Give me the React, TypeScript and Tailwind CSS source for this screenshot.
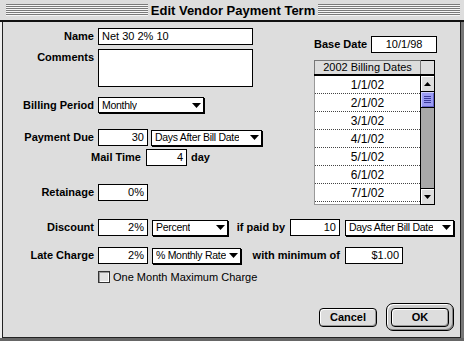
import React from "react";

function Field({ cls, children, align = "end" }: { cls: string; children?: React.ReactNode; align?: "start" | "end" | "center" }) {
  const a = align === "end" ? "justify-end" : align === "center" ? "justify-center" : "justify-start";
  return (
    <div className={`h-[17px] bg-white border border-black flex items-center px-[3px] whitespace-nowrap ${a} ${cls}`}>
      {children}
    </div>
  );
}

function Arrow() {
  return (
    <svg width="9" height="5" viewBox="0 0 9 5" className="shrink-0 ml-[2px]">
      <polygon points="0,0 9,0 4.5,5" fill="#000" />
    </svg>
  );
}

function Popup({ cls, children }: { cls: string; children: React.ReactNode }) {
  return (
    <div className={`h-[16px] bg-white border border-black shadow-[1px_1px_0_#000] flex items-center justify-between pl-[3px] pr-[2px] whitespace-nowrap ${cls}`}>
      <span className="text-[10.5px] tracking-[-0.3px] overflow-hidden">{children}</span>
      <Arrow />
    </div>
  );
}

function Label({ cls, children }: { cls: string; children: React.ReactNode }) {
  return <span className={`font-bold text-right whitespace-nowrap shrink-0 ${cls}`}>{children}</span>;
}

function Stripes() {
  return (
    <div className="flex-1 h-[12px] bg-[repeating-linear-gradient(to_bottom,#7a7a7a_0px,#7a7a7a_1px,#f6f6f6_1px,#f6f6f6_2px)]" />
  );
}

function Table() {
  const rows = ["1/1/02", "2/1/02", "3/1/02", "4/1/02", "5/1/02", "6/1/02", "7/1/02"];
  return (
    <div className="w-[121px] h-[145px] flex flex-col">
      <div className="flex h-[14px]">
        <div className="w-[107px] border-t border-l border-r border-[#777] bg-[#dddddd] flex items-center justify-center whitespace-nowrap">
          2002 Billing Dates
        </div>
        <div className="flex-1 border-t border-r border-black bg-[#dddddd]" />
      </div>
      <div className="h-[2px] bg-black" />
      <div className="flex-1 flex min-h-0">
        <div className="w-[106px] bg-white border-l border-b border-[#999] overflow-hidden flex flex-col">
          {rows.map((r) => (
            <div key={r} className="h-[18px] shrink-0 border-b border-dotted border-[#444] flex items-center justify-center text-[12px]">
              {r}
            </div>
          ))}
        </div>
        <div className="w-[15px] flex flex-col border-l border-r border-b border-black bg-[#a8a8a8]">
          <div className="h-[16px] bg-[#dddddd] border-b border-black flex items-center justify-center shadow-[inset_1px_1px_0_#fff]">
            <svg width="7" height="4" viewBox="0 0 7 4">
              <polygon points="3.5,0 7,4 0,4" fill="#000" />
            </svg>
          </div>
          <div className="h-[16px] bg-[#9c9cf4] border-b border-black flex flex-col items-center justify-center gap-[1px] shadow-[inset_1px_1px_0_#ccccff,inset_-1px_-1px_0_#6666cc]">
            <div className="w-[7px] h-[1px] bg-[#3a3a9a]" />
            <div className="w-[7px] h-[1px] bg-[#3a3a9a]" />
            <div className="w-[7px] h-[1px] bg-[#3a3a9a]" />
            <div className="w-[7px] h-[1px] bg-[#3a3a9a]" />
          </div>
          <div className="flex-1" />
          <div className="h-[16px] bg-[#dddddd] border-t border-black flex items-center justify-center shadow-[inset_1px_1px_0_#fff]">
            <svg width="7" height="4" viewBox="0 0 7 4">
              <polygon points="0,0 7,0 3.5,4" fill="#000" />
            </svg>
          </div>
        </div>
      </div>
    </div>
  );
}

export default function App() {
  return (
    <div className="w-[464px] h-[341px] flex flex-col overflow-hidden bg-[#dddddd] text-black font-['Liberation_Sans',Arial,sans-serif] text-[11px] leading-none">
      {/* Title bar */}
      <div className="h-[20px] flex items-center bg-[#dddddd] shrink-0">
        <div className="w-[6px]" />
        <Stripes />
        <div className="px-[3px] text-[13px] font-bold whitespace-nowrap">Edit Vendor Payment Term</div>
        <Stripes />
        <div className="w-[4px]" />
      </div>
      <div className="h-[2px] bg-[#111] shrink-0" />

      <div className="flex-1 flex min-h-0">
        <div className="w-[2px] bg-[#eeeeee]" />
        <div className="flex-1 flex flex-col border-l border-r border-b border-[#222] min-w-0">
          {/* Top section */}
          <div className="flex">
            <div className="w-[311px] flex flex-col">
              <div className="mt-[6px] h-[17px] flex items-center">
                <Label cls="w-[91px]">Name</Label>
                <Field cls="ml-[4px] w-[155px]" align="start">Net 30 2% 10</Field>
              </div>
              <div className="mt-[4px] h-[38px] flex items-start">
                <Label cls="w-[91px] pt-[3px]">Comments</Label>
                <div className="ml-[4px] w-[155px] h-[38px] bg-white border border-black" />
              </div>
              <div className="mt-[10px] h-[16px] flex items-center">
                <Label cls="w-[91px]">Billing Period</Label>
                <Popup cls="ml-[4px] w-[106px]">Monthly</Popup>
              </div>
              <div className="mt-[16px] h-[17px] flex items-center">
                <Label cls="w-[91px]">Payment Due</Label>
                <Field cls="ml-[4px] w-[50px]">30</Field>
                <Popup cls="ml-[3px] w-[111px]">Days After Bill Date</Popup>
              </div>
              <div className="mt-[3px] h-[17px] flex items-center">
                <Label cls="w-[138px]">Mail Time</Label>
                <Field cls="ml-[5px] w-[41px]">4</Field>
                <span className="ml-[4px] font-bold">day</span>
              </div>
              <div className="mt-[18px] h-[17px] flex items-center">
                <Label cls="w-[91px]">Retainage</Label>
                <Field cls="ml-[4px] w-[50px]">0%</Field>
              </div>
            </div>
            <div className="w-[123px] flex flex-col">
              <div className="mt-[14px] h-[17px] flex items-center justify-end">
                <Label cls="">Base Date</Label>
                <Field cls="ml-[4px] w-[66px]" align="center">10/1/98</Field>
              </div>
              <div className="mt-[7px]">
                <Table />
              </div>
            </div>
          </div>

          {/* Discount */}
          <div className="mt-[14px] h-[17px] flex items-center">
            <Label cls="w-[91px]">Discount</Label>
            <Field cls="ml-[4px] w-[50px]">2%</Field>
            <Popup cls="ml-[4px] w-[76px]">Percent</Popup>
            <Label cls="ml-[5px] w-[52px] text-left">if paid by</Label>
            <Field cls="ml-[5px] w-[50px]">10</Field>
            <Popup cls="ml-[5px] w-[109px]">Days After Bill Date</Popup>
          </div>

          {/* Late charge */}
          <div className="mt-[11px] h-[17px] flex items-center">
            <Label cls="w-[91px]">Late Charge</Label>
            <Field cls="ml-[4px] w-[50px]">2%</Field>
            <Popup cls="ml-[4px] w-[89px]">% Monthly Rate</Popup>
            <Label cls="ml-[9px] w-[90px] text-left">with minimum of</Label>
            <Field cls="ml-[5px] w-[58px]">$1.00</Field>
          </div>

          {/* Checkbox */}
          <div className="mt-[7px] h-[12px] flex items-center pl-[95px]">
            <div className="w-[12px] h-[12px] border border-[#333] bg-[#e4e4e4] shadow-[inset_1px_1px_0_#999,inset_-1px_-1px_0_#fff]" />
            <span className="ml-[3px] whitespace-nowrap">One Month Maximum Charge</span>
          </div>

          {/* Buttons */}
          <div className="mt-[20px] flex items-center justify-end pr-[6px]">
            <div className="w-[58px] h-[19px] rounded-[4px] border border-black bg-[#dddddd] shadow-[inset_1px_1px_0_#fff,inset_-1px_-1px_0_#999] flex items-center justify-center font-bold">
              Cancel
            </div>
            <div className="ml-[9px] w-[68px] h-[28px] rounded-[7px] border border-black bg-[#cccccc] shadow-[inset_1px_1px_0_#fff,inset_-1px_-1px_0_#888] flex items-center justify-center">
              <div className="w-[58px] h-[19px] rounded-[4px] border border-black bg-[#dddddd] shadow-[inset_1px_1px_0_#fff,inset_-1px_-1px_0_#999] flex items-center justify-center font-bold">
                OK
              </div>
            </div>
          </div>
        </div>
        <div className="w-[3px] bg-[#777]" />
      </div>
      <div className="h-[3px] bg-[#666] shrink-0" />
    </div>
  );
}
